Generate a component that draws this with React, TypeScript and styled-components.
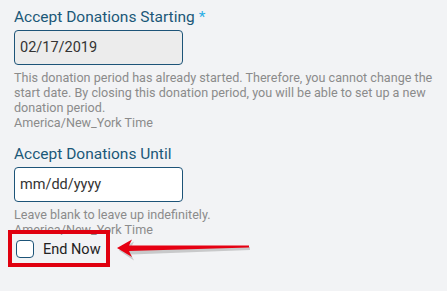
import React from 'react';
import styled, { createGlobalStyle } from 'styled-components';

const GlobalStyle = createGlobalStyle`
  html, body {
    margin: 0;
    padding: 0;
    background: #f2f3f5;
  }
  body {
    font-family: Roboto, "Liberation Sans", Arial, sans-serif;
  }
`;

const Page = styled.div`
  position: relative;
  width: 447px;
  height: 291px;
  overflow: hidden;
  padding: 7px 0 0 14px;
  box-sizing: border-box;
`;

const Field = styled.div<{ $gap?: number }>`
  display: flex;
  flex-direction: column;
  align-items: flex-start;
  margin-top: ${p => p.$gap ?? 0}px;
`;

const Label = styled.label`
  font-size: 15.5px;
  line-height: 20px;
  color: #1b5878;
  font-weight: 400;
`;

const Required = styled.span`
  color: #29aee6;
  margin-left: 4px;
`;

const DateInput = styled.div<{ $disabled?: boolean }>`
  margin-top: 3px;
  width: 169px;
  height: 35px;
  box-sizing: border-box;
  border: 1px solid #1d5478;
  border-radius: 4px;
  background: ${p => (p.$disabled ? '#ececec' : '#ffffff')};
  display: flex;
  align-items: center;
  padding-left: 5px;
  font-size: 14.5px;
  color: #333333;
`;

const Help = styled.div`
  margin-top: 5px;
  width: 432px;
  font-size: 12.6px;
  line-height: 15px;
  color: #8b8b8b;
`;

const CheckRow = styled.label`
  margin-top: 3px;
  display: flex;
  align-items: center;
  gap: 9px;
  padding-left: 2px;
  font-size: 14.5px;
  color: #222222;
`;

const Box = styled.span`
  width: 18px;
  height: 18px;
  box-sizing: border-box;
  border: 1.5px solid #1d5478;
  border-radius: 4px;
  background: #ffffff;
`;

const Highlight = styled.div`
  position: absolute;
  left: 8px;
  top: 230px;
  width: 102px;
  height: 37px;
  box-sizing: border-box;
  border: 4px solid #e0000f;
`;

const Arrow = styled.svg`
  position: absolute;
  left: 114px;
  top: 238px;
`;

export default function App() {
  return (
    <>
      <GlobalStyle />
      <Page>
        <Field>
          <Label>
            Accept Donations Starting<Required>*</Required>
          </Label>
          <DateInput $disabled>02/17/2019</DateInput>
          <Help>
            This donation period has already started. Therefore, you cannot change the start date. By
            closing this donation period, you will be able to set up a new donation period.
            <br />
            America/New_York Time
          </Help>
        </Field>
        <Field $gap={14}>
          <Label>Accept Donations Until</Label>
          <DateInput>mm/dd/yyyy</DateInput>
          <Help>
            Leave blank to leave up indefinitely.
            <br />
            America/New_York Time
          </Help>
          <CheckRow>
            <Box />
            End Now
          </CheckRow>
        </Field>
        <Highlight />
        <Arrow width="140" height="24" viewBox="0 0 140 24">
          <path d="M4 11 L19 2 L16 8 L135 7.5 L135 10.5 L16 15 L19 21 Z" fill="#8a8a8a" opacity="0.4" transform="translate(1 1.5)" />
          <path d="M3 10 L18 1.5 L15 7.5 L135 7.5 L135 9.5 L15 13 L18 19 Z" fill="#e60012" />
        </Arrow>
      </Page>
    </>
  );
}
